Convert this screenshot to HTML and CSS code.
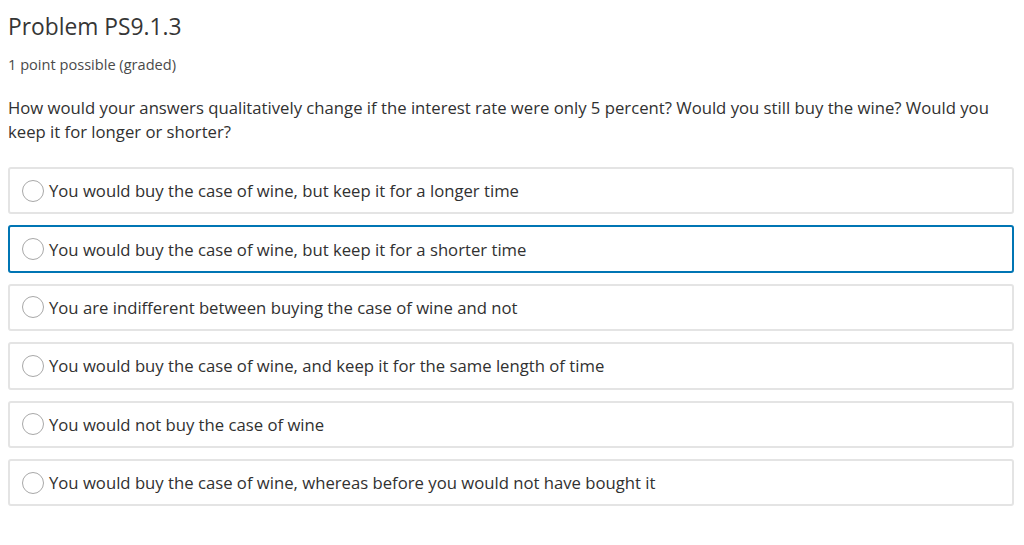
FILE: index.html
```html
<!DOCTYPE html>
<html>
<head>
<meta charset="utf-8">
<link rel="stylesheet" href="styles.css">
</head>
<body>
<div class="problem">
  <h3 class="title">Problem PS9.1.3</h3>
  <div class="meta">1 point possible (graded)</div>
  <p class="question">How would your answers qualitatively change if the interest rate were only 5 percent? Would you still buy the wine? Would you keep it for longer or shorter?</p>
  <div class="choices">
    <label class="choice"><span class="radio"></span><span>You would buy the case of wine, but keep it for a longer time</span></label>
    <label class="choice focused"><span class="radio"></span><span>You would buy the case of wine, but keep it for a shorter time</span></label>
    <label class="choice"><span class="radio"></span><span>You are indifferent between buying the case of wine and not</span></label>
    <label class="choice"><span class="radio"></span><span>You would buy the case of wine, and keep it for the same length of time</span></label>
    <label class="choice"><span class="radio"></span><span>You would not buy the case of wine</span></label>
    <label class="choice"><span class="radio"></span><span>You would buy the case of wine, whereas before you would not have bought it</span></label>
  </div>
</div>
</body>
</html>
```
FILE: styles.css
```css
html, body {
  margin: 0;
  padding: 0;
  background: #fff;
}
body {
  font-family: "Open Sans", sans-serif;
  color: #313131;
}
.problem {
  padding: 9px 10px 0 8px;
}
.title {
  margin: 0;
  font-size: 22.8px;
  font-weight: 400;
  line-height: 36px;
  color: #363636;
}
.meta {
  margin-top: 9px;
  font-size: 14.6px;
  line-height: 20px;
  color: #4a4a4a;
}
.question {
  margin: 22px 0 0 0;
  font-size: 16.7px;
  line-height: 24px;
  color: #313131;
}
.choices {
  margin-top: 23px;
  display: flex;
  flex-direction: column;
  gap: 11px;
}
.choice {
  display: flex;
  align-items: center;
  height: 43.4px;
  padding: 0 5px 0 12px;
  border: 2px solid #e4e4e4;
  border-radius: 3px;
  font-size: 16.7px;
  color: #313131;
}
.choice.focused {
  border-color: #0075b4;
}
.radio {
  width: 20px;
  height: 20px;
  border: 1px solid #a8a8a8;
  border-radius: 50%;
  margin-right: 5px;
  flex: none;
}
```
